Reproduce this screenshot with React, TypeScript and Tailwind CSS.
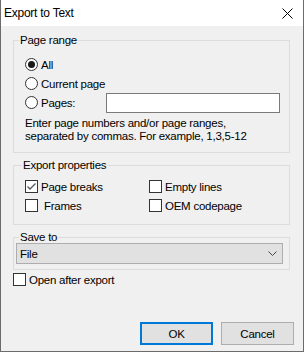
import React from "react";

function Radio({ checked = false }: { checked?: boolean }) {
  return (
    <span className="w-[13px] h-[13px] shrink-0 rounded-full border border-[#333333] bg-white flex items-center justify-center">
      {checked && <span className="w-[7px] h-[7px] rounded-full bg-[#1a1a1a]" />}
    </span>
  );
}

function Check({ checked = false }: { checked?: boolean }) {
  return (
    <span className="w-[13px] h-[13px] shrink-0 border border-[#333333] bg-white flex items-center justify-center">
      {checked && (
        <svg width="11" height="11" viewBox="0 0 11 11">
          <path d="M1.5 5.5 L4 8 L9.5 2.5" fill="none" stroke="#555555" strokeWidth="1.3" />
        </svg>
      )}
    </span>
  );
}

function Option({
  label,
  checked,
  kind,
  textClass = "",
}: {
  label: string;
  checked?: boolean;
  kind: "radio" | "check";
  textClass?: string;
}) {
  return (
    <div className="h-[19px] flex items-center gap-[3px]">
      {kind === "radio" ? <Radio checked={checked} /> : <Check checked={checked} />}
      <span className={`leading-[14px] ${textClass}`}>{label}</span>
    </div>
  );
}

export default function App() {
  return (
    <div className="w-[304px] h-[352px] flex flex-col border-x border-b border-[#6b6b6b] bg-[#f0f0f0] text-[11.5px] tracking-[-0.25px] text-black font-['Liberation_Sans',Arial,sans-serif]">
      {/* title bar */}
      <div className="h-[26px] shrink-0 bg-white flex items-center justify-between pl-[3px] pr-[10px]">
        <span className="leading-[14px] text-[12px]">Export to Text</span>
        <svg width="11" height="11" viewBox="0 0 11 11">
          <path d="M0.5 0.5 L10.5 10.5 M10.5 0.5 L0.5 10.5" stroke="#000" strokeWidth="1" />
        </svg>
      </div>

      <div className="flex-1 flex flex-col pl-[12px] pr-[13px] pt-[8px] pb-[6px]">
        <fieldset className="border border-[#dcdcdc]">
          <legend className="ml-[5px] px-[1px] leading-[12px]">Page range</legend>
          <div className="pl-[11px] pt-[9px] pb-[9px]">
            <Option kind="radio" label="All" checked />
            <Option kind="radio" label="Current page" />
            <div className="h-[19px] flex items-center">
              <Option kind="radio" label="Pages:" />
              <input className="ml-auto mr-[9px] w-[174px] h-[20px] border border-[#7a7a7a] bg-white outline-none" />
            </div>
            <p className="mt-[5px] leading-[13px]">
              Enter page numbers and/or page ranges,
              <br />
              separated by commas. For example, 1,3,5-12
            </p>
          </div>
        </fieldset>

        <fieldset className="mt-[6px] border border-[#dcdcdc]">
          <legend className="ml-[8px] px-[1px] leading-[12px]">Export properties</legend>
          <div className="grid grid-cols-[124px_1fr] pl-[11px] pt-[6px] pb-[9px]">
            <Option kind="check" label="Page breaks" checked />
            <Option kind="check" label="Empty lines" />
            <Option kind="check" label="Frames" textClass="ml-[3px]" />
            <Option kind="check" label="OEM codepage" />
          </div>
        </fieldset>

        <fieldset className="mt-[6px] border border-[#dcdcdc]">
          <legend className="ml-[5px] px-[1px] leading-[12px]">Save to</legend>
          <div className="pl-[2px] pb-[5px]">
            <div className="w-[267px] h-[21px] border border-[#adadad] bg-[#e1e1e1] flex items-center justify-between pl-[3px] pr-[5px]">
              <span className="leading-[14px]">File</span>
              <svg width="9" height="6" viewBox="0 0 9 6">
                <path d="M0.5 0.5 L4.5 4.5 L8.5 0.5" fill="none" stroke="#444" strokeWidth="1" />
              </svg>
            </div>
          </div>
        </fieldset>

        <div className="h-[19px] flex items-center gap-[3px]">
          <Check />
          <span className="leading-[14px]">Open after export</span>
        </div>

        <div className="mt-auto flex justify-end gap-[8px] mr-[-4px]">
          <button className="w-[73px] h-[23px] border-2 border-[#0078d7] bg-[#e1e1e1] leading-[14px]">OK</button>
          <button className="w-[73px] h-[23px] border border-[#adadad] bg-[#e1e1e1] leading-[14px]">Cancel</button>
        </div>
      </div>
    </div>
  );
}
